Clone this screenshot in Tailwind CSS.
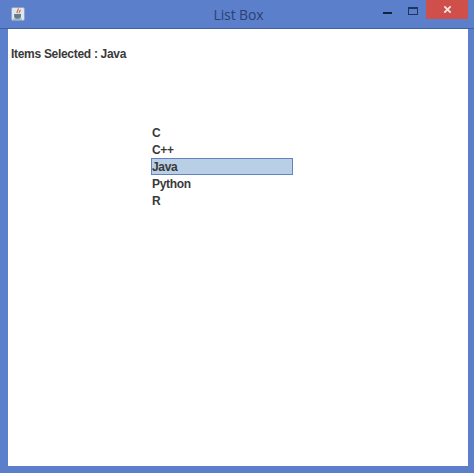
<!DOCTYPE html>
<html lang="en">
<head>
    <meta charset="UTF-8">
    <title>List Box</title>
    <script src="https://cdn.jsdelivr.net/npm/@tailwindcss/browser@4"></script>
</head>
<body class="bg-[#5c7fcb] h-[473px] w-[474px] overflow-hidden font-['Liberation_Sans',sans-serif] flex flex-col">
<!-- Title bar -->
<div class="h-[29px] shrink-0 flex items-start pl-[11px] pr-[6px] border-b border-[#3f5f9f]">
    <div class="w-[14px] h-[14px] mt-[7px] rounded-[2px] bg-[#dfe6f2] border border-[#8fa3c9] flex items-center justify-center">
        <svg viewBox="0 0 14 14" class="w-[12px] h-[12px]">
            <path d="M7 0.5c1.5 2-2 3-1 5.5M9.5 2c1 2-2 2.500-1 4" stroke="#d9622b" stroke-width="1.3" fill="none"/>
            <path d="M2.500 7h8v3a2.500 2.500 0 0 1-2.500 2.500H5a2.500 2.500 0 0 1-2.500-2.500z" fill="#5a7f8f"/>
            <path d="M1.500 13h10" stroke="#6f8fa0" stroke-width="1"/>
        </svg>
    </div>
    <div class="flex-1 text-center text-[#2a4273] text-[14px] tracking-[-0.1px] leading-[18px] mt-[6px] font-['Open_Sans',sans-serif] pl-[69px]">List Box</div>
    <div class="w-[9px] h-[2px] bg-[#14233f] mt-[12px]"></div>
    <div class="w-[10px] h-[8px] ml-[16px] mt-[7px] border border-[#1f3560] border-t-2"></div>
    <div class="w-[42px] h-[19px] ml-[8px] bg-[#cf4f4a] flex items-center justify-center">
        <svg viewBox="0 0 10 10" class="w-[9px] h-[9px]"><path d="M1.500 1.500l7 7M8.500 1.500l-7 7" stroke="#f6e6e4" stroke-width="2"/></svg>
    </div>
</div>
<!-- Content -->
<div class="w-[460px] h-[437px] ml-[8px] bg-white text-[#3a3a3a] text-[12px] tracking-[-0.3px] font-bold">
    <div class="pl-[3px] pt-[17px] leading-[16px]">Items Selected : Java</div>
    <ul class="w-[142px] ml-[143px] mt-[62px]">
        <li class="pl-px h-[17px] leading-[19px]">C</li>
        <li class="pl-px h-[17px] leading-[19px]">C++</li>
        <li class="pl-px h-[17px] leading-[19px] bg-[#b8cfe5] outline outline-1 -outline-offset-1 outline-[#6382bf]">Java</li>
        <li class="pl-px h-[17px] leading-[19px]">Python</li>
        <li class="pl-px h-[17px] leading-[19px]">R</li>
    </ul>
</div>
</body>
</html>
